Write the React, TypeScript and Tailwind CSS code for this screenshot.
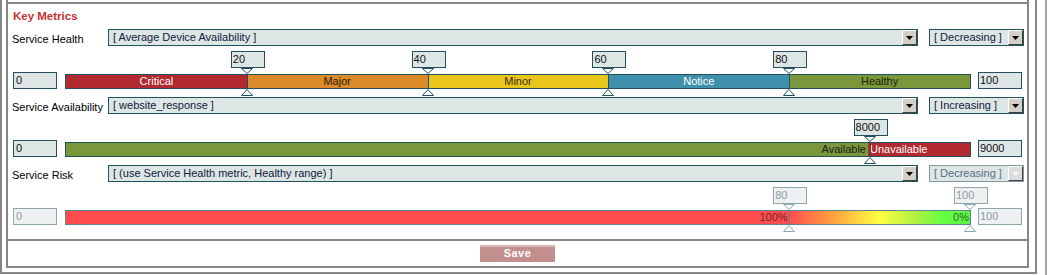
import type { CSSProperties, ReactNode } from 'react';

const BAR_W = 904; // inner width of a meter bar, px

function DropButton({ disabled }: { disabled?: boolean }) {
  return (
    <span
      className={`flex h-[15px] w-[15px] shrink-0 items-center justify-center border border-b-[#404040] border-l-white border-r-[#404040] border-t-white ${
        disabled ? 'bg-[#dcdcdc]' : 'bg-[#d4d0c8]'
      }`}
    >
      <svg width="7" height="4" viewBox="0 0 7 4">
        <path d="M0 0H7L3.5 4Z" fill={disabled ? '#f6f6f6' : '#000'} />
      </svg>
    </span>
  );
}

function Select({ text, disabled, className = '' }: { text: string; disabled?: boolean; className?: string }) {
  return (
    <div
      className={`flex h-[17px] items-center justify-between border bg-[#dde5e5] pl-[4px] text-[11px] leading-[15px] ${
        disabled ? 'border-[#7e9ba4] text-[#56708e]' : 'border-[#23505f] text-[#10203c]'
      } ${className}`}
    >
      <span className="whitespace-pre">{text}</span>
      <DropButton disabled={disabled} />
    </div>
  );
}

function Field({
  value,
  disabled,
  className = '',
  style,
}: {
  value: string;
  disabled?: boolean;
  className?: string;
  style?: CSSProperties;
}) {
  return (
    <div
      style={style}
      className={`h-[17px] border text-[11px] leading-[15px] ${
        disabled ? 'border-[#8ea7af] bg-[#edf1f1] text-[#8d9ca3]' : 'border-[#23505f] bg-[#dde5e5] text-[#111]'
      } ${className}`}
    >
      {value}
    </div>
  );
}

function MetricRow({ label, select, order, disabled }: { label: string; select: string; order: string; disabled?: boolean }) {
  return (
    <div className="flex h-[17px] items-start">
      <div className="h-[17px] w-[96px] pt-[3px] text-[11px] leading-[14px]">{label}</div>
      <Select text={select} className="flex-1" />
      <Select text={order} disabled={disabled} className="ml-[11px] w-[95px]" />
    </div>
  );
}

type Mark = { at: number; value: string };

function Meter({
  min,
  max,
  marks,
  disabled,
  children,
}: {
  min: string;
  max: string;
  marks: Mark[];
  disabled?: boolean;
  children: ReactNode;
}) {
  const stroke = disabled ? '#8ea7af' : '#23505f';
  return (
    <div className="ml-px mt-[5px] flex items-end">
      <Field value={min} disabled={disabled} className="w-[44px] pl-[2px]" />
      <div className="relative ml-[8px] w-[906px]">
        <div className="h-[17px]" />
        <div
          className={`mt-[6px] flex h-[15px] overflow-hidden border text-[11px] leading-[13px] ${
            disabled ? 'border-[#5e8792]' : 'border-[#23505f]'
          }`}
        >
          {children}
        </div>
        {marks.map((m) => {
          const x = 1 + m.at * BAR_W;
          return (
            <div key={m.value}>
              <Field value={m.value} disabled={disabled} className="absolute top-0 w-[34px] pl-[1px]" style={{ left: x - 16 }} />
              <svg className="absolute top-[17px]" style={{ left: x - 6 }} width="12" height="6" viewBox="0 0 12 6">
                <path d="M0.5 0.5H11.5L6 5.5Z" fill="#fff" stroke={stroke} />
              </svg>
              <div className={`absolute top-[23px] h-[15px] w-px ${disabled ? 'bg-[#5e8792]' : 'bg-[#23505f]'}`} style={{ left: x }} />
              <svg className="absolute top-[38px]" style={{ left: x - 6 }} width="12" height="7" viewBox="0 0 12 7">
                <path d="M6 0.5L11.5 6.5H0.5Z" fill="#fff" stroke={stroke} />
              </svg>
            </div>
          );
        })}
      </div>
      <Field value={max} disabled={disabled} className="ml-[7px] w-[44px] pl-[1px]" />
    </div>
  );
}

function Seg({ className, children }: { className: string; children: ReactNode }) {
  return <div className={`flex-1 text-center ${className}`}>{children}</div>;
}

export default function App() {
  return (
    <div className="flex h-[275px] w-[1050px] overflow-hidden bg-white font-['Liberation_Sans',Arial,sans-serif] text-black">
      <div className="flex h-[274px] w-[1037px] shrink-0 flex-col border-x-2 border-b-2 border-[#868686]">
        <div className="mb-[4px] ml-[4px] mr-[6px] flex flex-1 flex-col border-x-2 border-b-2 border-[#868686]">
          <div className="h-[2px]" />
          <section className="border-t-2 border-[#868686] pb-[14px] pl-[4px] pr-[3px] pt-[5px]">
            <h2 className="pl-px text-[11.5px] font-bold leading-[14px] text-[#c83131]">Key Metrics</h2>

            <div className="mt-[6px]">
              <MetricRow label="Service Health" select="[ Average Device Availability ]" order="[ Decreasing ]" />
              <Meter
                min="0"
                max="100"
                marks={[
                  { at: 0.2, value: '20' },
                  { at: 0.4, value: '40' },
                  { at: 0.6, value: '60' },
                  { at: 0.8, value: '80' },
                ]}
              >
                <Seg className="bg-[#b2292f] text-white">Critical</Seg>
                <Seg className="bg-[#dc8b2b] text-[#2a1c08]">Major</Seg>
                <Seg className="bg-[#e9c619] text-[#3a2c06]">Minor</Seg>
                <Seg className="bg-[#3f90ad] text-white">Notice</Seg>
                <Seg className="bg-[#7a973b] text-[#1a1f0c]">Healthy</Seg>
              </Meter>
            </div>

            <div className="mt-[8px]">
              <MetricRow label="Service Availability" select="[ website_response ]" order="[ Increasing ]" />
              <Meter min="0" max="9000" marks={[{ at: 8 / 9, value: '8000' }]}>
                <div className="flex-[8] bg-[#7a973b] pr-[2px] text-right text-[#1c1c1c]">Available</div>
                <div className="flex-[1] bg-[#b2292f] pl-[2px] text-white">Unavailable</div>
              </Meter>
            </div>

            <div className="mt-[8px]">
              <MetricRow label="Service Risk" select="[ (use Service Health metric, Healthy range) ]" order="[ Decreasing ]" disabled />
              <Meter
                min="0"
                max="100"
                disabled
                marks={[
                  { at: 0.8, value: '80' },
                  { at: 1, value: '100' },
                ]}
              >
                <div className="flex-[4] bg-[#ff4d4f] pr-[1px] text-right text-black/60">100%</div>
                <div className="flex-[1] bg-[linear-gradient(to_right,#ff4d4f_0%,#ffa040_24%,#ffff40_50%,#b0f040_70%,#66ff44_85%,#5cf048_100%)] pr-[1px] text-right text-black/60">
                  0%
                </div>
              </Meter>
            </div>
          </section>

          <div className="flex border-t-2 border-[#868686] py-[4px]">
            <button className="mx-auto h-[17px] w-[75px] bg-[#c38e8e] text-[11px] font-bold leading-[17px] tracking-[0.5px] text-white shadow-[inset_0_2px_0_#dbb7b7]">
              Save
            </button>
          </div>
        </div>
      </div>
      <div className="flex flex-1">
        <div className="ml-[8px] w-[2px] bg-[#a4a4a4]" />
      </div>
    </div>
  );
}
